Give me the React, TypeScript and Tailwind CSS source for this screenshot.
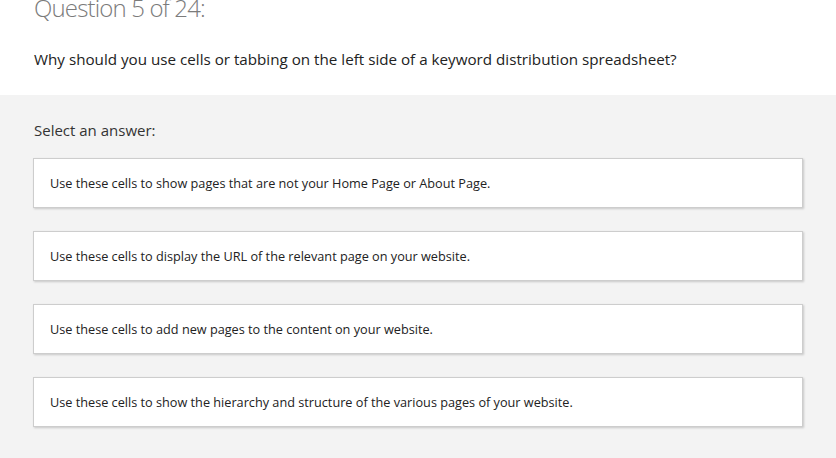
const answers = [
  'Use these cells to show pages that are not your Home Page or About Page.',
  'Use these cells to display the URL of the relevant page on your website.',
  'Use these cells to add new pages to the content on your website.',
  'Use these cells to show the hierarchy and structure of the various pages of your website.',
];

export default function App() {
  return (
    <div className="h-[458px] w-[836px] overflow-hidden bg-[#f3f3f3] font-['Open_Sans',sans-serif]">
      {/* question header */}
      <div className="flex h-[95px] flex-col bg-white px-[34px]">
        <h1 className="-mt-[10px] text-[24px] leading-[36px] font-light tracking-[-0.85px] text-[#7b7b7b]">
          Question 5 of 24:
        </h1>
        <p className="mt-[22px] text-[15.2px] leading-[22px] text-[#222]">
          Why should you use cells or tabbing on the left side of a keyword distribution spreadsheet?
        </p>
      </div>

      {/* answers */}
      <div className="px-[33px] pt-[24px]">
        <p className="pl-px text-[15px] leading-[22px] text-[#333]">Select an answer:</p>
        <div className="mt-[17px] flex w-[770px] flex-col gap-[23px]">
          {answers.map((a) => (
            <div
              key={a}
              className="flex h-[50px] items-center border border-[#cdcdcd] bg-white px-[16px] pt-px text-[12.7px] text-[#222] shadow-[1px_1px_2px_rgba(0,0,0,0.18)]"
            >
              {a}
            </div>
          ))}
        </div>
      </div>
    </div>
  );
}
